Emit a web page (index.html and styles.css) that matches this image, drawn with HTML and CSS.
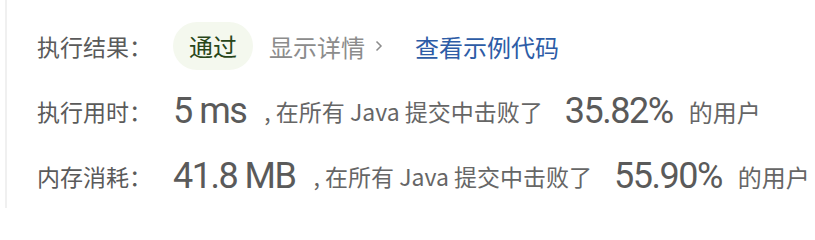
FILE: index.html
```html
<!DOCTYPE html>
<html lang="zh-CN">
<head>
<meta charset="utf-8">
<title>执行结果</title>
<link rel="stylesheet" href="styles.css">
</head>
<body>
<div class="panel">
  <div class="row">
    <span class="label">执行结果：</span>
    <span class="pill">通过</span>
    <span class="details">显示详情<svg class="chev" width="8" height="12" viewBox="0 0 8 12"><path d="M1.5 1.5 L6 6 L1.5 10.5" fill="none" stroke="#8c8c8c" stroke-width="1.5"/></svg></span>
    <span class="link">查看示例代码</span>
  </div>
  <div class="row">
    <span class="label">执行用时：</span>
    <span class="num">5 ms</span>
    <span class="small">, 在所有 Java 提交中击败了</span>
    <span class="num pct">35.82%</span>
    <span class="small users">的用户</span>
  </div>
  <div class="row">
    <span class="label">内存消耗：</span>
    <span class="num">41.8 MB</span>
    <span class="small">, 在所有 Java 提交中击败了</span>
    <span class="num pct">55.90%</span>
    <span class="small users">的用户</span>
  </div>
</div>
</body>
</html>
```

FILE: styles.css
```css
html, body {
  margin: 0;
  padding: 0;
  background: #ffffff;
}
body {
  font-family: "Noto Sans CJK SC", "Noto Sans", sans-serif;
  width: 815px;
  height: 208px;
  overflow: hidden;
}
.panel {
  margin-left: 5px;
  border-left: 2px solid #f0f0f0;
  height: 208px;
  box-sizing: border-box;
  padding: 22px 0 0 30px;
  display: flex;
  flex-direction: column;
  gap: 17px;
}
.row {
  display: flex;
  align-items: center;
  height: 48px;
  white-space: nowrap;
}
.label {
  width: 136px;
  flex: none;
  font-size: 23px;
  color: #5a5a5a;
}
.pill {
  background: #f4f8ee;
  color: #284619;
  font-size: 24px;
  height: 48px;
  line-height: 48px;
  padding: 0 16px;
  border-radius: 24px;
  box-sizing: border-box;
}
.details {
  margin-left: 16px;
  font-size: 24px;
  color: #8c8c8c;
  display: flex;
  align-items: center;
}
.chev {
  margin-left: 10px;
}
.link {
  margin-left: 32px;
  font-size: 24px;
  color: #2d5ca6;
}
.num {
  font-family: Roboto, "Noto Sans", sans-serif;
  font-weight: 400;
  font-size: 36px;
  color: #5a5a5a;
  letter-spacing: -1.5px;
}
.small {
  font-size: 23px;
  color: #666666;
  margin-left: 18px;
}
.pct {
  margin-left: 22px;
}
.users {
  font-size: 24px;
  margin-left: 16px;
}
```
